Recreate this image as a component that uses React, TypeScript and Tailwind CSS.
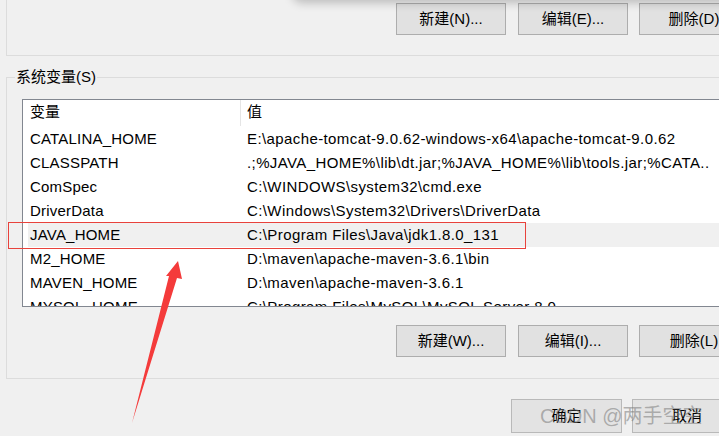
import React from "react";

const font = { fontFamily: '"Liberation Sans", "Noto Sans CJK SC", sans-serif' };

function Btn({ label, className = "" }: { label: string; className?: string }) {
  return (
    <div
      className={
        "h-[32px] w-[110px] shrink-0 border border-[#adadad] bg-[#e1e1e1] flex items-center justify-center text-[15px] text-black " +
        className
      }
    >
      {label}
    </div>
  );
}

const rows: [string, string][] = [
  ["CATALINA_HOME", "E:\\apache-tomcat-9.0.62-windows-x64\\apache-tomcat-9.0.62"],
  ["CLASSPATH", ".;%JAVA_HOME%\\lib\\dt.jar;%JAVA_HOME%\\lib\\tools.jar;%CATA.."],
  ["ComSpec", "C:\\WINDOWS\\system32\\cmd.exe"],
  ["DriverData", "C:\\Windows\\System32\\Drivers\\DriverData"],
  ["JAVA_HOME", "C:\\Program Files\\Java\\jdk1.8.0_131"],
  ["M2_HOME", "D:\\maven\\apache-maven-3.6.1\\bin"],
  ["MAVEN_HOME", "D:\\maven\\apache-maven-3.6.1"],
  ["MYSQL_HOME", "C:\\Program Files\\MySQL\\MySQL Server 8.0"],
];

export default function App() {
  return (
    <div
      className="relative w-[719px] h-[436px] overflow-hidden bg-[#f0f0f0] text-black"
      style={font}
    >
      {/* shadow of window above */}
      <div className="absolute left-[292px] top-[-24px] w-[620px] h-[24px] rounded-[10px] bg-[#f0f0f0] shadow-[0_3px_10px_rgba(0,0,0,0.22)]" />

      {/* top group box */}
      <div className="ml-[6px] h-[56px] border-l border-b border-[#dcdcdc] pt-[3px]">
        <div className="flex pl-[389px]">
          <Btn label="新建(N)..." />
          <Btn label="编辑(E)..." className="ml-[12px]" />
          <Btn label="删除(D)" className="ml-[11px]" />
        </div>
      </div>

      {/* system variables group */}
      <div className="relative ml-[6px] mt-[21px] h-[302px] border-l border-t border-b border-[#dcdcdc]">
        <span className="absolute left-[8px] top-[-10px] bg-[#f0f0f0] px-[1px] text-[15px] leading-[18px]">
          系统变量(S)
        </span>
        <div className="ml-[15px] mt-[21px] h-[208px] w-[720px] border border-[#828790] bg-white overflow-hidden">
          <div className="flex h-[27px] items-center text-[15px]">
            <div className="w-[217px] pl-[7px] pb-[2px]">变量</div>
            <div className="h-[26px] w-px bg-[#e5e5e5] self-start" />
            <div className="pl-[6px] pb-[2px]">值</div>
          </div>
          {rows.map(([k, v]) => (
            <div
              key={k}
              className={
                "ml-[5px] flex h-[24px] items-center text-[15px] whitespace-nowrap " +
                (k === "JAVA_HOME" ? "bg-[#f0f0f0]" : "")
              }
            >
              <div className="w-[212px] shrink-0 pl-[2px] tracking-[0.2px]">{k}</div>
              <div className="pl-[7px] tracking-[0.4px]">{v}</div>
            </div>
          ))}
        </div>
        <div className="flex pl-[389px] mt-[18px]">
          <Btn label="新建(W)..." />
          <Btn label="编辑(I)..." className="ml-[12px]" />
          <Btn label="删除(L)" className="ml-[11px]" />
        </div>
      </div>

      {/* OK / Cancel */}
      <div className="flex pl-[511px] mt-[20px]">
        <div className="h-[34px] w-[111px] shrink-0 border border-[#b9b9b9] bg-[#e3e3e3] flex items-center justify-center text-[15px]">
          确定
        </div>
        <div className="ml-[10px] h-[34px] w-[110px] shrink-0 border border-[#b9b9b9] bg-[#e3e3e3] flex items-center justify-center text-[15px]">
          取消
        </div>
      </div>

      {/* watermark */}
      <div className="absolute left-[540px] top-[404px] text-[20px] leading-[24px] text-[rgba(120,120,120,0.55)] whitespace-nowrap pointer-events-none">
        CSDN @两手空空
      </div>

      {/* red highlight rectangle */}
      <div className="absolute left-[8px] top-[222px] w-[518px] h-[27px] border border-[#e8423c] pointer-events-none" />

      {/* red arrow */}
      <svg
        className="absolute left-0 top-0 pointer-events-none"
        width="719"
        height="436"
        viewBox="0 0 719 436"
      >
        <polygon
          points="178,261 182,279 177,278 132,423 169,276 166,276"
          fill="#f43b3b"
        />
      </svg>
    </div>
  );
}
